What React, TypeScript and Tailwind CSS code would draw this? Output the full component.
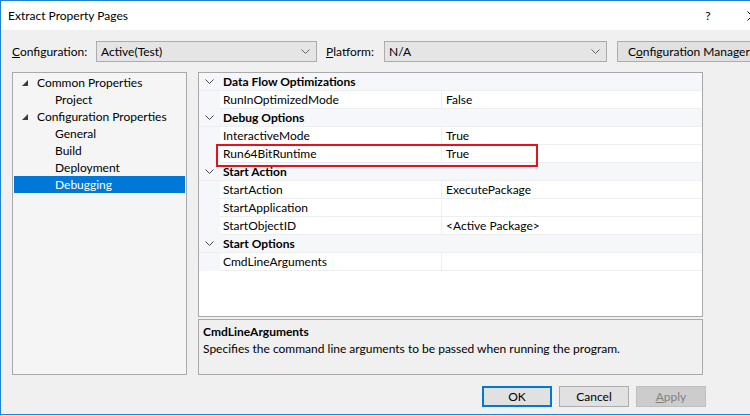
import React from "react";

type Row = { cat?: string; name?: string; value?: string };

const rows: Row[] = [
  { cat: "Data Flow Optimizations" },
  { name: "RunInOptimizedMode", value: "False" },
  { cat: "Debug Options" },
  { name: "InteractiveMode", value: "True" },
  { name: "Run64BitRuntime", value: "True" },
  { cat: "Start Action" },
  { name: "StartAction", value: "ExecutePackage" },
  { name: "StartApplication", value: "" },
  { name: "StartObjectID", value: "<Active Package>" },
  { cat: "Start Options" },
  { name: "CmdLineArguments", value: "" },
];

const tree = [
  { label: "Common Properties", level: 0 },
  { label: "Project", level: 1 },
  { label: "Configuration Properties", level: 0 },
  { label: "General", level: 1 },
  { label: "Build", level: 1 },
  { label: "Deployment", level: 1 },
  { label: "Debugging", level: 1, selected: true },
];

function Chevron({ className = "" }: { className?: string }) {
  return (
    <svg width="9" height="5" viewBox="0 0 9 5" className={className}>
      <path d="M0.5 0.5 L4.5 4.5 L8.5 0.5" fill="none" stroke="currentColor" strokeWidth="1" />
    </svg>
  );
}

function Expander() {
  return (
    <svg width="6" height="6" viewBox="0 0 6 6">
      <path d="M6 0 L6 6 L0 6 Z" fill="#3c3c3c" />
    </svg>
  );
}

function Combo({ text, width }: { text: string; width: string }) {
  return (
    <div
      className={`${width} h-[21px] flex items-center bg-[#e5e5e5] border border-[#acacac] pl-[4px] pr-[6px]`}
    >
      <span className="flex-1">{text}</span>
      <Chevron className="text-[#5f5f5f]" />
    </div>
  );
}

export default function App() {
  return (
    <div className="w-[750px] h-[416px] overflow-hidden bg-white font-['Lato',sans-serif] text-[12px] text-black leading-none">
      <div className="w-[775px] h-[415px] flex flex-col border-l border-t border-b border-[#1c82d6]">
        {/* title bar */}
        <div className="h-[29px] bg-white flex items-center pl-[7px] shrink-0">
          <span>Extract Property Pages</span>
          <span className="ml-auto w-[38px] text-center pr-[4px]">?</span>
          <span className="w-[46px] flex justify-center">
            <svg width="10" height="10" viewBox="0 0 10 10">
              <path d="M0.5 0.5 L9.5 9.5 M9.5 0.5 L0.5 9.5" stroke="#000" strokeWidth="1" />
            </svg>
          </span>
        </div>

        <div className="flex-1 bg-[#f0f0f0] flex flex-col pl-[11px] pt-[11px]">
          {/* configuration row */}
          <div className="flex items-center h-[21px]">
            <span className="w-[84px]">
              <span className="underline">C</span>onfiguration:
            </span>
            <Combo text="Active(Test)" width="w-[221px]" />
            <span className="ml-[9px] w-[58px]">
              <span className="underline">P</span>latform:
            </span>
            <Combo text="N/A" width="w-[223px]" />
            <div className="ml-[10px] w-[150px] h-[21px] shrink-0 flex items-center bg-[#e1e1e1] border border-[#adadad] pl-[10px] whitespace-nowrap">
              C<span className="underline">o</span>nfiguration Manager...
            </div>
          </div>

          {/* main area */}
          <div className="flex mt-[10px]">
            {/* tree */}
            <div className="w-[175px] h-[303px] bg-[#f5f5f5] border border-[#a9a9a9] pt-[1px] px-px">
              {tree.map((t) => (
                <div
                  key={t.label}
                  className={`h-[17px] flex items-center ${
                    t.selected ? "bg-[#0078d7] text-white" : ""
                  }`}
                >
                  {t.level === 0 ? (
                    <>
                      <span className="w-[23px] flex pl-[8px] mt-[1px]">
                        <Expander />
                      </span>
                      <span>{t.label}</span>
                    </>
                  ) : (
                    <span className="pl-[41px]">{t.label}</span>
                  )}
                </div>
              ))}
            </div>

            {/* right column */}
            <div className="ml-[11px] w-[505px] flex flex-col">
              <div className="relative h-[245px] bg-white border border-[#a9a9a9]">
                {rows.map((r, i) =>
                  r.cat ? (
                    <div key={i} className="h-[18px] flex items-center bg-[#f5f7fa] border-b border-[#edeef0]">
                      <span className="w-[21px] flex justify-center">
                        <Chevron className="text-[#444]" />
                      </span>
                      <span className="pl-[3px] font-bold">{r.cat}</span>
                    </div>
                  ) : (
                    <div key={i} className="h-[18px] flex">
                      <span className="w-[21px] bg-[#f5f7fa]" />
                      <span className="w-[222px] flex items-center pl-[3px] border-b border-r border-[#edeef0]">
                        {r.name}
                      </span>
                      <span className="flex-1 flex items-center pl-[4px] border-b border-[#edeef0]">
                        {r.value}
                      </span>
                    </div>
                  )
                )}
                <div className="absolute left-[17px] top-[71px] w-[322px] h-[23px] border-2 border-[#e3121c]" />
              </div>

              <div className="mt-[2px] h-[56px] bg-[#f0f0f0] border border-[#a9a9a9] pl-[4px] pt-[4px]">
                <div className="font-bold h-[16px] flex items-center">CmdLineArguments</div>
                <div className="h-[18px] flex items-center">
                  Specifies the command line arguments to be passed when running the program.
                </div>
              </div>
            </div>
          </div>

          {/* buttons */}
          <div className="flex mt-[11px] pl-[470px] gap-[7px]">
            <div className="w-[70px] h-[21px] flex items-center justify-center bg-[#e1e1e1] border border-[#0078d7] shadow-[inset_0_0_0_1px_#0078d7]">
              OK
            </div>
            <div className="w-[70px] h-[21px] flex items-center justify-center bg-[#e1e1e1] border border-[#adadad]">
              Cancel
            </div>
            <div className="w-[70px] h-[21px] flex items-center justify-center bg-[#cccccc] border border-[#bfbfbf] text-[#838383]">
              <span className="underline">A</span>pply
            </div>
          </div>
        </div>
      </div>
    </div>
  );
}
